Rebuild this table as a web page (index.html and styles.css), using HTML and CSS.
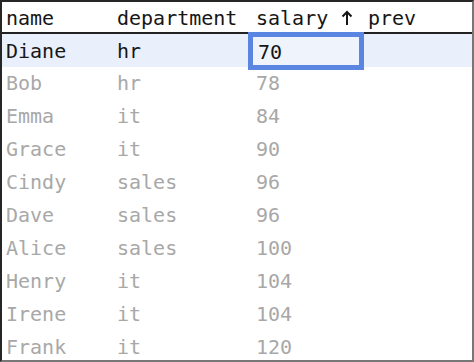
FILE: index.html
```html
<!DOCTYPE html>
<html>
<head>
<meta charset="utf-8">
<link rel="stylesheet" href="styles.css">
</head>
<body>
<div class="frame">
  <div class="row head">
    <div class="cell">name</div>
    <div class="cell">department</div>
    <div class="cell">salary <svg class="arrow" width="12" height="16" viewBox="0 0 12 16"><path d="M6 15V2M1.5 6.5L6 2l4.5 4.5" fill="none" stroke="#161616" stroke-width="2"/></svg></div>
    <div class="cell">prev</div>
  </div>
  <div class="row current">
    <div class="cell">Diane</div>
    <div class="cell">hr</div>
    <div class="cell focus"><span class="focus-box"></span>70</div>
    <div class="cell"></div>
  </div>
  <div class="row dim"><div class="cell">Bob</div><div class="cell">hr</div><div class="cell">78</div><div class="cell"></div></div>
  <div class="row dim"><div class="cell">Emma</div><div class="cell">it</div><div class="cell">84</div><div class="cell"></div></div>
  <div class="row dim"><div class="cell">Grace</div><div class="cell">it</div><div class="cell">90</div><div class="cell"></div></div>
  <div class="row dim"><div class="cell">Cindy</div><div class="cell">sales</div><div class="cell">96</div><div class="cell"></div></div>
  <div class="row dim"><div class="cell">Dave</div><div class="cell">sales</div><div class="cell">96</div><div class="cell"></div></div>
  <div class="row dim"><div class="cell">Alice</div><div class="cell">sales</div><div class="cell">100</div><div class="cell"></div></div>
  <div class="row dim"><div class="cell">Henry</div><div class="cell">it</div><div class="cell">104</div><div class="cell"></div></div>
  <div class="row dim"><div class="cell">Irene</div><div class="cell">it</div><div class="cell">104</div><div class="cell"></div></div>
  <div class="row dim"><div class="cell">Frank</div><div class="cell">it</div><div class="cell">120</div><div class="cell"></div></div>
</div>
</body>
</html>
```
FILE: styles.css
```css
html, body {
  margin: 0;
  padding: 0;
  background: #ffffff;
}
.frame {
  width: 474px;
  height: 362px;
  box-sizing: border-box;
  border-top: 2px solid #262626;
  border-left: 2px solid #262626;
  border-right: 2px solid #777777;
  border-bottom: 2px solid #777777;
  overflow: hidden;
  font-family: "DejaVu Sans Mono", "Liberation Mono", monospace;
  font-size: 20px;
  color: #161616;
}
.row {
  display: grid;
  grid-template-columns: 111px 139px 112px 1fr;
  height: 33px;
  align-items: center;
}
.head {
  height: 30px;
  border-bottom: 2px solid #222222;
}
.cell {
  padding-left: 4px;
  white-space: nowrap;
  line-height: 33px;
}
.arrow {
  vertical-align: -1px;
  margin-left: 1px;
}
.current {
  background: #e9f0fb;
}
.current .cell {
  line-height: 35px;
}
.dim {
  color: #a8a8a8;
}
.focus {
  position: relative;
  height: 33px;
  padding-left: 6px;
  background: #eef3fc;
}
.focus-box {
  position: absolute;
  left: -4px;
  top: -3px;
  width: 116px;
  height: 38px;
  box-sizing: border-box;
  border: 5px solid #5a86e2;
}
```
